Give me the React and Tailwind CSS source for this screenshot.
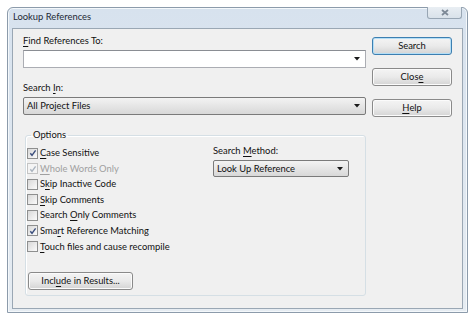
import React from 'react';

const U = ({ children }) => <span className="underline underline-offset-[1.5px]">{children}</span>;

function Arrow() {
  return (
    <svg width="6" height="4" viewBox="0 0 6 4" className="shrink-0">
      <path d="M0 0H6L3 3.5Z" fill="#1a1a1a" />
    </svg>
  );
}

function Check({ checked, disabled }) {
  return (
    <span className={`w-[11px] h-[11px] border flex items-center justify-center shrink-0 ${disabled ? 'border-[#c4c4c4] bg-[#f4f4f4]' : 'border-[#8e8f8f] bg-gradient-to-br from-[#d8d8d8] to-[#fbfbfb]'}`}>
      {checked && (
        <svg width="8" height="8" viewBox="0 0 8 8">
          <path d="M1.3 4.3L3 6.3L6.6 1.3" fill="none" stroke={disabled ? '#aab4bf' : '#3a4d7c'} strokeWidth="1.4" />
        </svg>
      )}
    </span>
  );
}

function Button({ children, primary, className = '' }) {
  return (
    <div
      className={`h-[18px] rounded-[3px] border flex items-center justify-center bg-gradient-to-b from-[#f4f4f4] via-[#eaeaea] to-[#d4d4d4] ${primary ? 'border-[#3c7fb1] shadow-[inset_0_0_0_1px_#b4def6]' : 'border-[#8a8a8a] shadow-[inset_0_0_0_1px_#fbfbfb]'} ${className}`}
    >
      {children}
    </div>
  );
}

const options = [
  { label: <><U>C</U>ase Sensitive</>, checked: true },
  { label: <><U>W</U>hole Words Only</>, checked: true, disabled: true },
  { label: <>S<U>k</U>ip Inactive Code</> },
  { label: <><U>S</U>kip Comments</> },
  { label: <>Search <U>O</U>nly Comments</> },
  { label: <>Sma<U>r</U>t Reference Matching</>, checked: true },
  { label: <><U>T</U>ouch files and cause recompile</> },
];

export default function App() {
  return (
    <div className="w-[474px] h-[322px] bg-white pl-[7px] pt-[7px] text-[9.4px] leading-[12px] text-[#111]" style={{ fontFamily: 'Lato, "Open Sans", sans-serif' }}>
      <div className="w-[461px] h-[306px] rounded-t-[6px] border border-[#8c9bab] bg-gradient-to-b from-[#d7e2ee] to-[#e6ecf2] flex flex-col px-[4px] pb-[3px] shadow-[inset_0_0_0_1px_#f4f8fb]">
        <div className="h-[20px] flex items-start justify-between">
          <span className="pl-[1px] pt-[3px] text-[#1e2a36]">Lookup References</span>
          <div className="w-[35px] h-[12px] mr-[1px] mt-[-1px] border border-[#98a6b4] border-t-0 rounded-b-[3px] bg-gradient-to-b from-[#e9eef3] to-[#d9e2ea] flex items-center justify-center">
            <svg width="8" height="7" viewBox="0 0 8 7">
              <path d="M1 1L7 6M7 1L1 6" stroke="#7e8a97" strokeWidth="1.8" />
            </svg>
          </div>
        </div>
        <div className="flex-1 border border-[#9aa7b4] bg-[#f0f0f0] flex pl-[10px] pt-[6px] gap-[6px]">
          <div className="w-[343px] flex flex-col">
            <span><U>F</U>ind References To:</span>
            <div className="mt-[3px] h-[18px] bg-white border border-[#abadb3] border-t-[#8a8d93] flex items-center justify-end pr-[5px]">
              <Arrow />
            </div>
            <span className="mt-[14px]">Search <U>I</U>n:</span>
            <div className="mt-[3px] h-[18px] rounded-[2px] border border-[#7a7a7a] bg-gradient-to-b from-[#f3f3f3] to-[#d8d8d8] flex items-center justify-between pl-[3px] pr-[5px]">
              <span>All Project Files</span>
              <Arrow />
            </div>
            <fieldset className="mt-[14px] ml-[2px] w-[341px] h-[167px] border border-[#d5dfe5] rounded-[3px] shadow-[inset_1px_1px_0_#fff] pl-[1px] pt-[6px]">
              <legend className="ml-[4px] px-[2px]">Options</legend>
              <div className="flex">
                <div className="w-[186px] flex flex-col gap-[3.6px]">
                  {options.map((o, i) => (
                    <div key={i} className={`h-[12px] flex items-center gap-[2px] ${o.disabled ? 'text-[#a0a0a0]' : ''}`}>
                      <Check checked={o.checked} disabled={o.disabled} />
                      <span>{o.label}</span>
                    </div>
                  ))}
                  <Button className="mt-[16px] ml-[1px] w-[105px] h-[17px]">
                    <span>Incl<U>u</U>de in Results...</span>
                  </Button>
                </div>
                <div className="flex flex-col mt-[-2px]">
                  <span>Search <U>M</U>ethod:</span>
                  <div className="mt-[3px] w-[136px] h-[17px] rounded-[2px] border border-[#7a7a7a] bg-gradient-to-b from-[#f3f3f3] to-[#d8d8d8] flex items-center justify-between pl-[3px] pr-[5px]">
                    <span>Look Up Reference</span>
                    <Arrow />
                  </div>
                </div>
              </div>
            </fieldset>
          </div>
          <div className="flex flex-col pt-[2px] gap-[13px]">
            <Button primary className="w-[80px]">Search</Button>
            <Button className="w-[80px]">Clos<U>e</U></Button>
            <Button className="w-[80px]"><U>H</U>elp</Button>
          </div>
        </div>
      </div>
    </div>
  );
}
